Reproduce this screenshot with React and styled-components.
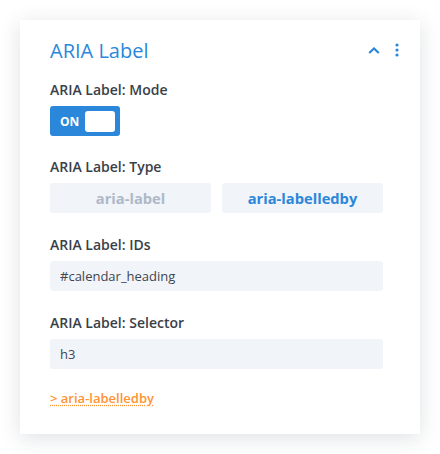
import React from "react";
import styled, { createGlobalStyle } from "styled-components";

const Global = createGlobalStyle`
  html, body { margin: 0; padding: 0; background: #fff; }
  body { font-family: "Open Sans", "Noto Sans", sans-serif; }
`;

const Page = styled.div`
  width: 440px;
  height: 454px;
  padding: 20px;
  box-sizing: border-box;
  background: #fff;
`;

const Card = styled.div`
  width: 400px;
  height: 414px;
  box-sizing: border-box;
  background: #fff;
  box-shadow: 0 4px 20px rgba(43, 56, 72, 0.15);
  padding: 15px 37px 0 30px;
  display: flex;
  flex-direction: column;
`;

const Header = styled.div`
  display: flex;
  align-items: center;
  justify-content: space-between;
  height: 30px;
  margin-right: -16px;
`;

const Title = styled.h2`
  margin: 0;
  font-size: 20px;
  font-weight: 400;
  color: #2b87da;
`;

const Tools = styled.div`
  display: flex;
  align-items: center;
  gap: 15px;
`;

const Label = styled.div`
  font-size: 14px;
  font-weight: 600;
  color: #3a4048;
  line-height: 20px;
  margin-top: ${(p) => p.$mt}px;
`;

const Toggle = styled.div`
  margin-top: 6px;
  width: 70px;
  height: 30px;
  border-radius: 3px;
  background: #2b87da;
  box-sizing: border-box;
  padding: 4px 5px 4px 10px;
  display: flex;
  align-items: center;
  justify-content: space-between;
`;

const ToggleText = styled.span`
  color: #fff;
  font-size: 12px;
  font-weight: 700;
`;

const Knob = styled.span`
  width: 30px;
  height: 21px;
  border-radius: 3px;
  background: #fff;
`;

const Segments = styled.div`
  margin-top: 6px;
  display: grid;
  grid-template-columns: 1fr 1fr;
  gap: 11px;
`;

const Segment = styled.div`
  height: 30px;
  border-radius: 3px;
  background: #f1f4f9;
  display: flex;
  align-items: center;
  justify-content: center;
  font-size: 14.7px;
  font-weight: 700;
  color: ${(p) => (p.$active ? "#2b87da" : "#adb9c8")};
`;

const Input = styled.div`
  margin-top: 6px;
  height: 30px;
  border-radius: 3px;
  background: #f1f4f9;
  box-sizing: border-box;
  padding: 0 10px;
  display: flex;
  align-items: center;
  font-size: 13px;
  color: #3e4650;
`;

const Link = styled.a`
  margin-top: 20px;
  align-self: flex-start;
  font-size: 13px;
  line-height: 18px;
  font-weight: 600;
  color: #ff9232;
  text-decoration: underline;
  text-decoration-style: dotted;
  text-underline-offset: 2px;
`;

export default function App() {
  return (
    <Page>
      <Global />
      <Card>
        <Header>
          <Title>ARIA Label</Title>
          <Tools>
            <svg width="12" height="7" viewBox="0 0 12 7">
              <path d="M1.2 6 L6 1.5 L10.8 6" fill="none" stroke="#2b87da" strokeWidth="2.2" />
            </svg>
            <svg width="4" height="14" viewBox="0 0 4 14">
              <circle cx="2" cy="2" r="1.6" fill="#2b87da" />
              <circle cx="2" cy="7" r="1.6" fill="#2b87da" />
              <circle cx="2" cy="12" r="1.6" fill="#2b87da" />
            </svg>
          </Tools>
        </Header>
        <Label $mt={15}>ARIA Label: Mode</Label>
        <Toggle>
          <ToggleText>ON</ToggleText>
          <Knob />
        </Toggle>
        <Label $mt={21}>ARIA Label: Type</Label>
        <Segments>
          <Segment>aria-label</Segment>
          <Segment $active>aria-labelledby</Segment>
        </Segments>
        <Label $mt={22}>ARIA Label: IDs</Label>
        <Input>#calendar_heading</Input>
        <Label $mt={22}>ARIA Label: Selector</Label>
        <Input>h3</Input>
        <Link>&gt; aria-labelledby</Link>
      </Card>
    </Page>
  );
}
